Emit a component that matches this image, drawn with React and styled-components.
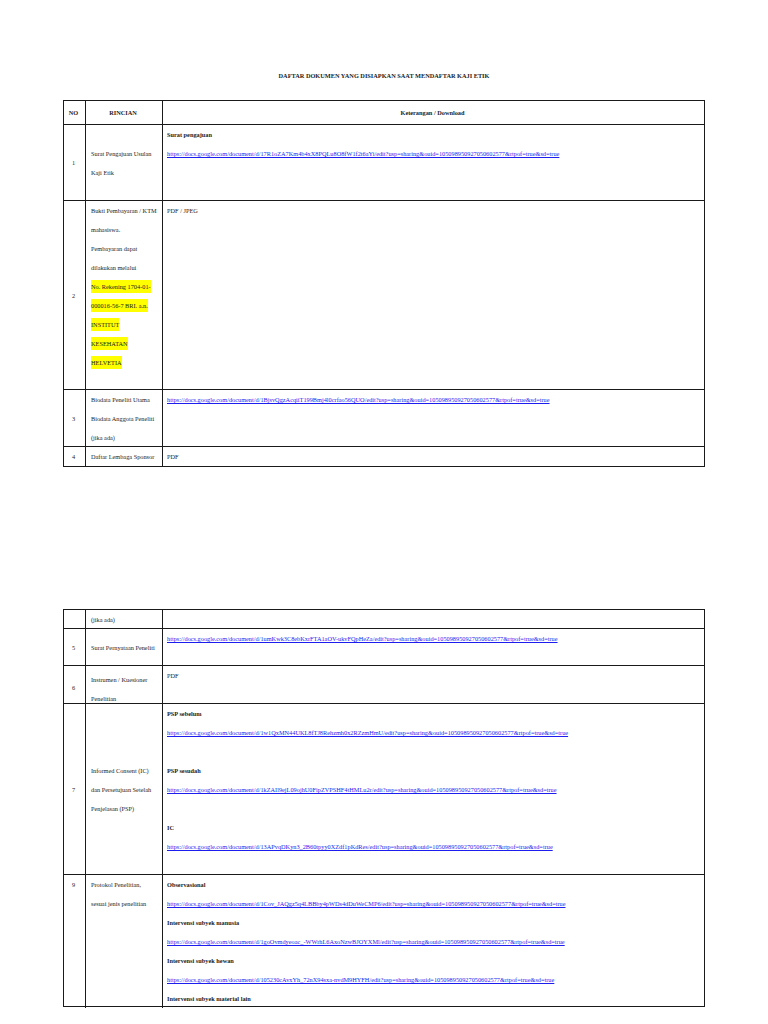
import React from 'react'
import styled, { createGlobalStyle } from 'styled-components'

const GlobalStyle = createGlobalStyle`
    html, body {
        margin: 0;
        padding: 0;
        background: #ffffff;
    }
    body {
        font-family: "Liberation Serif", "Times New Roman", serif;
        color: #1c1c1c;
    }
`

const Page = styled.div`
    width: 768px;
    padding-top: 66px;
    padding-bottom: 17px;
    box-sizing: border-box;
`

const Title = styled.h1`
    margin: 0 0 15px 0;
    font-size: 6.3px;
    line-height: 19px;
    font-weight: bold;
    text-align: center;
`

const Table = styled.div`
    width: 642px;
    margin-left: 63px;
    border: 1px solid #1a1a1a;
    box-sizing: border-box;
    margin-top: ${p => p.$gap || 0}px;
`

const Row = styled.div`
    display: grid;
    grid-template-columns: 22px 77px 1fr;
    height: ${p => p.$h}px;
    box-sizing: border-box;
    border-bottom: 1px solid #1a1a1a;

    &:last-child {
        border-bottom: none;
    }
`

const Cell = styled.div`
    display: flex;
    flex-direction: column;
    justify-content: ${p => (p.$middle ? 'center' : 'flex-start')};
    align-items: ${p => (p.$center ? 'center' : 'flex-start')};
    padding: ${p => p.$pt || 0}px 2px 0 ${p => (p.$center ? 0 : p.$pl)}px;
    border-right: 1px solid #1a1a1a;
    box-sizing: border-box;
    overflow: visible;
    font-size: 6.3px;

    &:last-child {
        border-right: none;
    }
`

const Line = styled.div`
    height: 19px;
    line-height: 19px;
    white-space: nowrap;
    font-weight: ${p => (p.$bold ? 'bold' : 'normal')};
`

const Link = styled.a`
    color: #1d1df0;
    text-decoration: underline;
`

const Mark = styled.span`
    background: #ffff00;
    padding: 3px 0;
`

const URL_TAIL = '/edit?usp=sharing&ouid=105098950927050602577&rtpof=true&sd=true'
const doc = id => `https://docs.google.com/document/d/${id}${URL_TAIL}`

const B = t => ({ t, bold: true })
const L = id => ({ link: doc(id) })
const H = t => ({ t, hl: true })
const E = { t: '\u00a0' }

const page1 = [
    {
        h: 76, no: '1', rinMiddle: true,
        rincian: ['Surat Pengajuan Usulan', 'Kaji Etik'],
        ket: [B('Surat pengajuan'), L('17R1oZA7Km4b4xX8PQLu8O8fW1f2t6aYi')],
    },
    {
        h: 189, no: '2',
        rincian: [
            'Bukti Pembayaran / KTM', 'mahasiswa.', 'Pembayaran dapat', 'dilakukan melalui',
            H('No. Rekening 1704-01-'), H('000016-56-7 BRI. a.n.'), H('INSTITUT'),
            H('KESEHATAN'), H('HELVETIA'),
        ],
        ket: ['PDF / JPEG'],
    },
    {
        h: 57, no: '3',
        rincian: ['Biodata  Peneliti Utama', 'Biodata  Anggota Peneliti', '(jika ada)'],
        ket: [L('1BjsvQgzAcqiiT199Bmj4l0crfao56QUO')],
    },
    { h: 19, no: '4', rincian: ['Daftar Lembaga Sponsor'], ket: ['PDF'] },
]

const page2 = [
    { h: 19, no: '', rincian: ['(jika ada)'], ket: [] },
    {
        h: 37, no: '5', rinMiddle: true,
        rincian: ['Surat Pernyataan Peneliti'],
        ket: [L('1umKwk3C8ebKxrFTA1aOV-ukvFQpHeZa')],
    },
    {
        h: 38, no: '6', rinPad: 4,
        rincian: ['Instrumen / Kuesioner', 'Penelitian'],
        ket: ['PDF'],
    },
    {
        h: 171, no: '7', rinMiddle: true,
        rincian: ['Informed Consent (IC)', 'dan Persetujuan Setelah', 'Penjelasan (PSP)'],
        ket: [
            B('PSP sebelum'), L('1w1QxMN44UKL8fTJ8Rehzmh0x2RZzmHmU'), E,
            B('PSP sesudah'), L('1kZAIl9ejL09ojhU0FipZVPSHF4tHMLu2r'), E,
            B('IC'), L('13APvqDKyn3_2B60tpyy0XZdf1pKdRes'),
        ],
    },
    {
        h: 131, no: '9', noTop: true,
        rincian: ['Protokol Penelitian,', 'sesuai jenis penelitian'],
        ket: [
            B('Observasional'), L('1Cov_JAQgz5q4LBBby4pWDs4dDuWeCMP6'),
            B('Intervensi subyek manusia'), L('1goOvmdyeoac_-WWrhL6AxoNzwBJOYXMl'),
            B('Intervensi subyek hewan'), L('105230cAvxYh_72nX94sxa-nvdM9HYFH'),
            B('Intervensi subyek material lain'),
        ],
    },
]

const renderLine = (item, i) => {
    if (typeof item === 'string') return <Line key={i}>{item}</Line>
    if (item.link) return <Line key={i}><Link href={item.link}>{item.link}</Link></Line>
    if (item.hl) return <Line key={i}><Mark>{item.t}</Mark></Line>
    return <Line key={i} $bold={item.bold}>{item.t}</Line>
}

const DocRow = ({ row }) => (
    <Row $h={row.h}>
        <Cell $center $middle={!row.noTop}>
            <Line>{row.no}</Line>
        </Cell>
        <Cell $pl={5} $middle={row.rinMiddle} $pt={row.rinPad}>
            {row.rincian.map(renderLine)}
        </Cell>
        <Cell $pl={4}>
            {row.ket.map(renderLine)}
        </Cell>
    </Row>
)

const App = () => (
    <>
        <GlobalStyle />
        <Page>
            <Title>DAFTAR DOKUMEN YANG DISIAPKAN SAAT MENDAFTAR KAJI ETIK</Title>

            <Table>
                <Row $h={24}>
                    <Cell $center $middle><Line $bold>NO</Line></Cell>
                    <Cell $center $middle><Line $bold>RINCIAN</Line></Cell>
                    <Cell $center $middle><Line $bold>Keterangan / Download</Line></Cell>
                </Row>
                {page1.map((row, i) => <DocRow key={i} row={row} />)}
            </Table>

            <Table $gap={142}>
                {page2.map((row, i) => <DocRow key={i} row={row} />)}
            </Table>
        </Page>
    </>
)

export default App
